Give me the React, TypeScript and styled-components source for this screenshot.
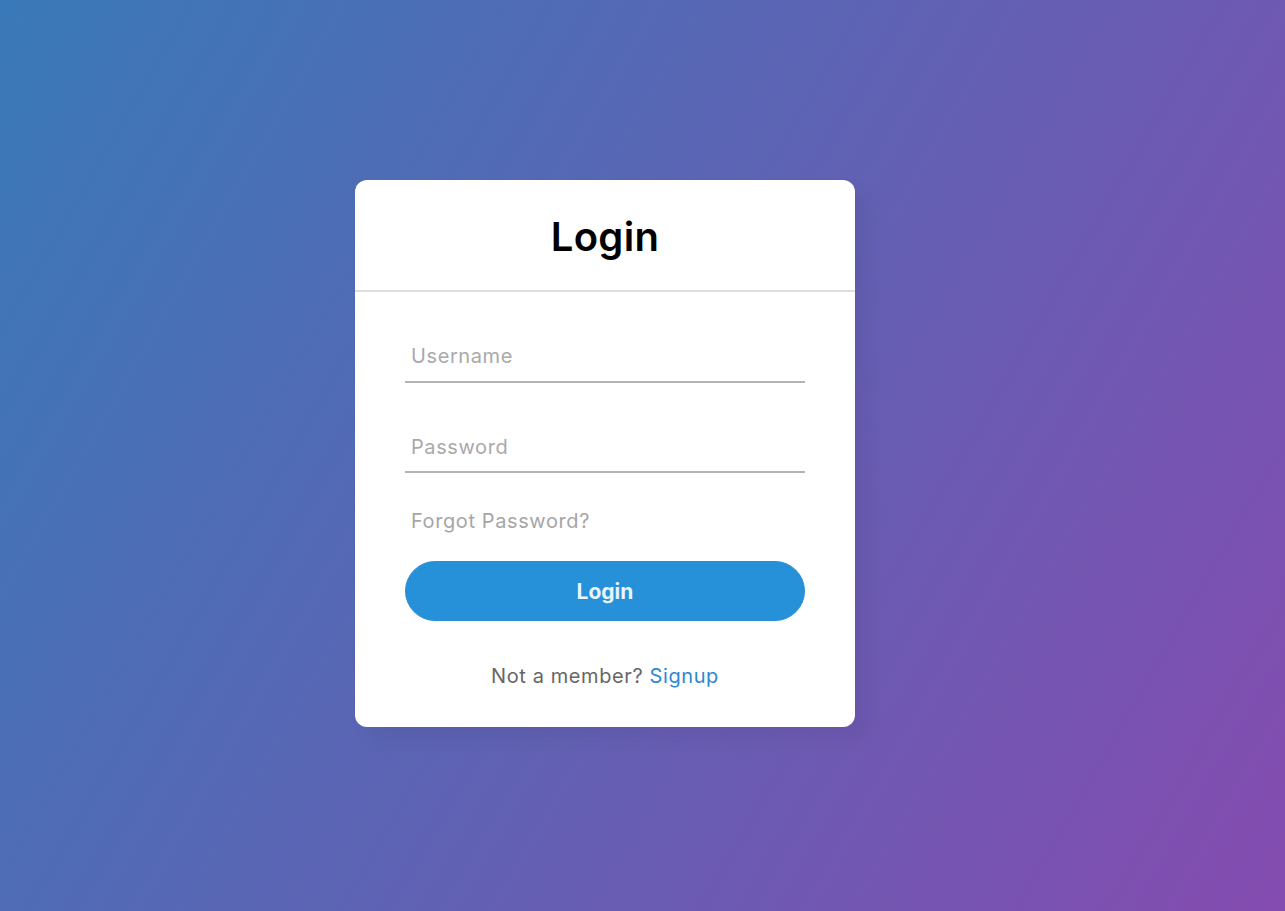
import React from "react";
import styled, { createGlobalStyle } from "styled-components";

const GlobalStyle = createGlobalStyle`
  * { box-sizing: border-box; }
  html, body { margin: 0; padding: 0; }
  body {
    font-family: Inter, "Open Sans", "Liberation Sans", sans-serif;
    background: linear-gradient(120deg, #3979b8, #854cb0);
    height: 100vh;
    overflow: hidden;
  }
`;

const Page = styled.main`
  height: 911px;
  display: flex;
  align-items: center;
  justify-content: center;
  padding-right: 75px;
`;

const Card = styled.section`
  width: 500px;
  background: #ffffff;
  border-radius: 12px;
  box-shadow: 12px 12px 19px rgba(0, 0, 0, 0.06);
  margin-top: -4px;
`;

const Title = styled.h1`
  margin: 0;
  text-align: center;
  padding: 27px 0 23px;
  font-size: 40px;
  line-height: 60px;
  font-weight: 600;
  color: #000;
  letter-spacing: 0.3px;
  border-bottom: 2px solid #dedede;
`;

const Form = styled.form`
  padding: 0 50px;
  display: flex;
  flex-direction: column;
`;

const Field = styled.div`
  border-bottom: 2.5px solid #b4b4b4;
  margin-top: 37.5px;
`;

const Input = styled.input`
  display: block;
  width: 100%;
  height: 51px;
  padding: 2px 6px 0;
  font-family: inherit;
  font-size: 20px;
  letter-spacing: 0.6px;
  border: none;
  background: none;
  outline: none;
  color: #333;
  &::placeholder {
    color: #a9a9a9;
  }
`;

const Forgot = styled.div`
  margin: 33px 0 25px 6px;
  font-size: 20px;
  letter-spacing: 0.6px;
  line-height: 30px;
  color: #a6a6a6;
  cursor: pointer;
`;

const Submit = styled.button`
  width: 100%;
  height: 60px;
  border: 1px solid #2a8ed6;
  background: #2691d9;
  border-radius: 30px;
  font-family: inherit;
  font-size: 21px;
  font-weight: 700;
  color: #e9f4fb;
  cursor: pointer;
`;

const SignupRow = styled.div`
  margin: 40px 0 36px;
  text-align: center;
  font-size: 20px;
  letter-spacing: 0.6px;
  line-height: 30px;
  color: #666666;
`;

const SignupLink = styled.a`
  color: #2f86d1;
  text-decoration: none;
`;

export default function App() {
  return (
    <>
      <GlobalStyle />
      <Page>
        <Card>
          <Title>Login</Title>
          <Form onSubmit={(e) => e.preventDefault()}>
            <Field>
              <Input type="text" placeholder="Username" />
            </Field>
            <Field>
              <Input type="password" placeholder="Password" />
            </Field>
            <Forgot>Forgot Password?</Forgot>
            <Submit type="submit">Login</Submit>
            <SignupRow>
              Not a member? <SignupLink href="#">Signup</SignupLink>
            </SignupRow>
          </Form>
        </Card>
      </Page>
    </>
  );
}
